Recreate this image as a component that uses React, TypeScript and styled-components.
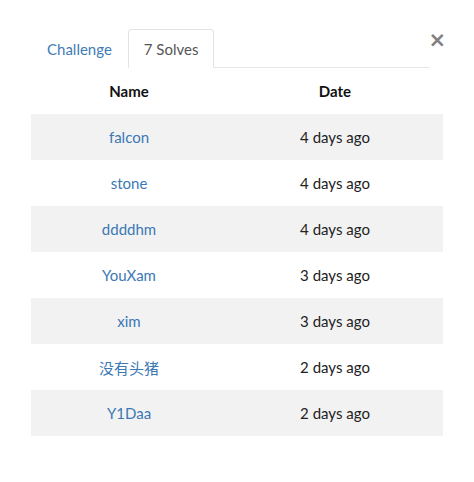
import React from "react";
import styled, { createGlobalStyle } from "styled-components";

type ISolve = {
  name: string;
  date: string;
};

const solves: Array<ISolve> = [
  { name: "falcon", date: "4 days ago" },
  { name: "stone", date: "4 days ago" },
  { name: "ddddhm", date: "4 days ago" },
  { name: "YouXam", date: "3 days ago" },
  { name: "xim", date: "3 days ago" },
  { name: "没有头猪", date: "2 days ago" },
  { name: "Y1Daa", date: "2 days ago" },
];

const GlobalStyle = createGlobalStyle`
  body {
    margin: 0;
    background: #fff;
    font-family: Lato, "Noto Sans CJK SC", sans-serif;
    font-size: 15px;
    color: #212529;
  }
`;

const Modal = styled.div`
  position: relative;
  width: 474px;
  height: 482px;
  padding: 29px 31px 0 31px;
  box-sizing: border-box;
`;

const CloseButton = styled.button`
  position: absolute;
  top: 30px;
  right: 28px;
  border: none;
  background: none;
  padding: 0;
  color: #808080;
  font-family: "DejaVu Sans", sans-serif;
  font-size: 21px;
  font-weight: bold;
  line-height: 1;
  cursor: pointer;
`;

const Tabs = styled.ul`
  display: flex;
  list-style: none;
  margin: 0;
  padding: 0;
  width: 399px;
  border-bottom: 1px solid #e6e6e6;
`;

const Tab = styled.li<{ $active?: boolean }>`
  margin-bottom: -1px;
  padding: 8px 15px 7px;
  line-height: 22px;
  border: 1px solid ${(p) => (p.$active ? "#e3e3e3" : "transparent")};
  border-bottom-color: ${(p) => (p.$active ? "#fff" : "transparent")};
  border-radius: 4px 4px 0 0;
  background: #fff;
  color: ${(p) => (p.$active ? "#555" : "#3f7cb5")};
  cursor: pointer;
`;

const Table = styled.table`
  width: 412px;
  border-collapse: collapse;
`;

const HeadCell = styled.th`
  height: 46px;
  padding: 0;
  font-weight: bold;
  color: #111;
  text-align: center;
`;

const Row = styled.tr<{ $striped: boolean }>`
  background: ${(p) => (p.$striped ? "#f2f2f2" : "#fff")};
`;

const Cell = styled.td`
  height: 46px;
  padding: 0;
  text-align: center;
  color: #222;
`;

const NameLink = styled.a`
  color: #3b78b4;
  text-decoration: none;
`;

const App: React.FC = () => {
  return (
    <>
      <GlobalStyle />
      <Modal>
        <CloseButton aria-label="Close">×</CloseButton>
        <Tabs>
          <Tab>Challenge</Tab>
          <Tab $active>7 Solves</Tab>
        </Tabs>
        <Table>
          <thead>
            <tr>
              <HeadCell style={{ width: 196 }}>Name</HeadCell>
              <HeadCell>Date</HeadCell>
            </tr>
          </thead>
          <tbody>
            {solves.map((s, i) => (
              <Row key={s.name} $striped={i % 2 === 0}>
                <Cell>
                  <NameLink href="#">{s.name}</NameLink>
                </Cell>
                <Cell>{s.date}</Cell>
              </Row>
            ))}
          </tbody>
        </Table>
      </Modal>
    </>
  );
};

export default App;
